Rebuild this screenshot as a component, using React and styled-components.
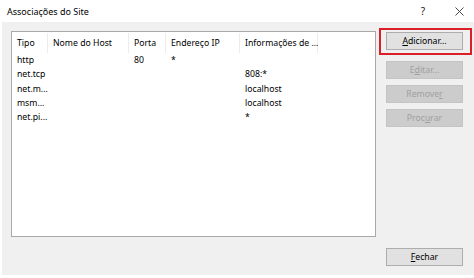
import React from 'react';
import styled, { createGlobalStyle } from 'styled-components';

const GlobalStyle = createGlobalStyle`
  html, body {
    margin: 0;
    padding: 0;
    background: #ffffff;
  }
  body {
    font-family: "Noto Sans", "Open Sans", "DejaVu Sans", sans-serif;
    font-size: 8.7px;
    color: #000;
  }
`;

const columns = [
  { key: 'tipo', label: 'Tipo', width: 36 },
  { key: 'host', label: 'Nome do Host', width: 81 },
  { key: 'porta', label: 'Porta', width: 37 },
  { key: 'ip', label: 'Endereço IP', width: 74 },
  { key: 'info', label: 'Informações de ...', width: 78 }
];

const rows = [
  { tipo: 'http', host: '', porta: '80', ip: '*', info: '' },
  { tipo: 'net.tcp', host: '', porta: '', ip: '', info: '808:*' },
  { tipo: 'net.m...', host: '', porta: '', ip: '', info: 'localhost' },
  { tipo: 'msm...', host: '', porta: '', ip: '', info: 'localhost' },
  { tipo: 'net.pi...', host: '', porta: '', ip: '', info: '*' }
];

const Window = styled.div`
  width: 474px;
  height: 278px;
  display: flex;
  flex-direction: column;
  background: #ffffff;
  overflow: hidden;
`;

const TitleBar = styled.div`
  height: 22px;
  display: flex;
  align-items: center;
  padding-left: 7px;
  font-size: 9px;
  color: #000;
`;

const Title = styled.div`
  flex: 1;
`;

const TitleButton = styled.div`
  width: ${p => p.$w}px;
  margin-right: ${p => p.$mr || 0}px;
  display: flex;
  align-items: center;
  justify-content: center;
  font-size: ${p => p.$size}px;
  color: #222;
`;

const Body = styled.div`
  height: 253px;
  margin-left: 2px;
  background: #f0f0f0;
  display: flex;
  padding: 9px 0 0 9px;
  box-sizing: border-box;
`;

const ListBox = styled.div`
  width: 365px;
  height: 206px;
  background: #ffffff;
  border: 1px solid #a9a9a9;
  box-sizing: border-box;
  padding: 1px 0 0 0;
`;

const HeaderRow = styled.div`
  display: flex;
  height: 20px;
  align-items: center;
`;

const HeaderCell = styled.div`
  width: ${p => p.$w}px;
  height: 100%;
  display: flex;
  align-items: center;
  box-sizing: border-box;
  border-right: 1px solid #ececec;
  padding-left: 5px;
  white-space: nowrap;
  flex-shrink: 0;
`;

const Row = styled.div`
  display: flex;
  height: 14.3px;
  align-items: center;
`;

const Cell = styled.div`
  width: ${p => p.$w}px;
  white-space: nowrap;
  flex-shrink: 0;
  padding-left: 5px;
  box-sizing: border-box;
`;

const Side = styled.div`
  flex: 1;
  display: flex;
  flex-direction: column;
  padding-left: 10px;
  padding-bottom: 9px;
`;

const Highlight = styled.div`
  width: 84px;
  height: 21px;
  margin: -3px 0 0 -7px;
  border: 2px solid #dc1f26;
  padding: 2px 0 0 5px;
`;

const Button = styled.div`
  width: 77px;
  height: 18px;
  box-sizing: border-box;
  display: flex;
  align-items: center;
  justify-content: center;
  border: 1px solid ${p => (p.$disabled ? '#c4c4c4' : '#adadad')};
  background: ${p => (p.$disabled ? '#cccccc' : '#e1e1e1')};
  color: ${p => (p.$disabled ? '#a0a0a0' : '#000')};
  margin-top: ${p => p.$mt || 0}px;

  u {
    text-decoration: underline;
    text-underline-offset: 1px;
  }
`;

const Spacer = styled.div`
  flex: 1;
`;

const Label = ({ text, at }) => (
  <span>
    {text.slice(0, at)}
    <u>{text[at]}</u>
    {text.slice(at + 1)}
  </span>
);

const CloseIcon = () => (
  <svg width="9" height="9" viewBox="0 0 9 9">
    <path d="M0.5 0.5 L8.5 8.5 M8.5 0.5 L0.5 8.5" stroke="#333" strokeWidth="0.9" fill="none" />
  </svg>
);

export default function App() {
  return (
    <>
      <GlobalStyle />
      <Window>
        <TitleBar>
          <Title>Associações do Site</Title>
          <TitleButton $w={20} $mr={11} $size={10}>?</TitleButton>
          <TitleButton $w={30}><CloseIcon /></TitleButton>
        </TitleBar>
        <Body>
          <ListBox>
            <HeaderRow>
              {columns.map(c => (
                <HeaderCell key={c.key} $w={c.width}>{c.label}</HeaderCell>
              ))}
            </HeaderRow>
            {rows.map((r, i) => (
              <Row key={i}>
                {columns.map(c => (
                  <Cell key={c.key} $w={c.width}>{r[c.key]}</Cell>
                ))}
              </Row>
            ))}
          </ListBox>
          <Side>
            <Highlight>
              <Button><Label text="Adicionar..." at={0} /></Button>
            </Highlight>
            <Button $disabled $mt={6}><Label text="Editar..." at={1} /></Button>
            <Button $disabled $mt={6}><Label text="Remover" at={6} /></Button>
            <Button $disabled $mt={6}><Label text="Procurar" at={4} /></Button>
            <Spacer />
            <Button><Label text="Fechar" at={0} /></Button>
          </Side>
        </Body>
      </Window>
    </>
  );
}
